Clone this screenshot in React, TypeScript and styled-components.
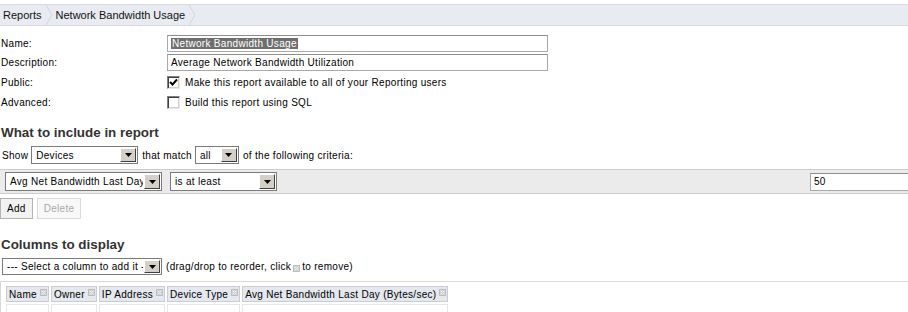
import React from 'react';
import styled, { createGlobalStyle } from 'styled-components';

const GlobalStyle = createGlobalStyle`
  html, body {
    margin:0;
    padding:0;
    background:#fff;
  }
  body {
    width:908px;
    height:312px;
    overflow:hidden;
    font-family:"Liberation Sans", Arial, sans-serif;
    font-size:10px;
    letter-spacing:0.3px;
    color:#000;
  }
`;

const Page = styled.div`
  padding-top:4px;
`;

const Crumbs = styled.div`
  display:flex;
  align-items:center;
  height:20px;
  background:#e9ebf3;
  border-top:1px solid #d9dadf;
  border-bottom:1px solid #d9dadf;
  font-size:11px;
  letter-spacing:0;
  color:#111;
  padding-left:3px;
  > span {
    white-space:nowrap;
  }
`;

const Sep = styled.svg`
  width:14px;
  height:20px;
  flex-shrink:0;
`;

const Form = styled.div`
  display:grid;
  grid-template-columns:166px 1fr;
  grid-auto-rows:auto;
  row-gap:2px;
  margin-top:9px;
  padding-left:1px;
`;

const Label = styled.div<{ $h: number }>`
  height:${p => p.$h}px;
  display:flex;
  align-items:center;
`;

const Field = styled.div<{ $h: number }>`
  height:${p => p.$h}px;
  display:flex;
  align-items:center;
`;

const TextInput = styled.div<{ $w: number; $h: number }>`
  box-sizing:border-box;
  width:${p => p.$w}px;
  height:${p => p.$h}px;
  border:1px solid #a9a9ad;
  border-top-color:#8e8e92;
  background:#fff;
  padding-left:3px;
  display:flex;
  align-items:center;
  white-space:nowrap;
  overflow:hidden;
  flex-shrink:0;
`;

const Picked = styled.span`
  background:#6f6f6f;
  color:#fff;
  padding:0 1px;
`;

const Check = styled.span`
  box-sizing:border-box;
  width:13px;
  height:13px;
  margin-right:5px;
  background:#fff;
  border:1px solid;
  border-color:#808080 #e8e8e8 #e8e8e8 #808080;
  box-shadow:inset 1px 1px 0 #404040, inset -1px -1px 0 #d4d0c8;
  display:flex;
  align-items:center;
  justify-content:center;
`;

const Heading = styled.h2<{ $top: number }>`
  margin:${p => p.$top}px 0 0;
  padding-left:1px;
  font-size:13.4px;
  line-height:16px;
  font-weight:bold;
  letter-spacing:0;
  color:#333;
`;

const Line = styled.div<{ $top: number }>`
  display:flex;
  align-items:center;
  gap:3px;
  margin-top:${p => p.$top}px;
  padding-left:2px;
  white-space:nowrap;
`;

const Gap = styled.span`
  margin-left:1px;
`;

const SelectBox = styled.div<{ $w: number; $h: number }>`
  box-sizing:border-box;
  width:${p => p.$w}px;
  height:${p => p.$h}px;
  border:1px solid #7b7b7b;
  background:#fff;
  display:flex;
  align-items:stretch;
  padding-left:4px;
  flex-shrink:0;
  white-space:nowrap;
`;

const SelectText = styled.span`
  flex:1;
  overflow:hidden;
  display:flex;
  align-items:center;
`;

const Arrow = styled.span`
  box-sizing:border-box;
  width:16px;
  margin:1px;
  background:#d4d0c8;
  border:1px solid;
  border-color:#fff #404040 #404040 #fff;
  display:flex;
  align-items:center;
  justify-content:center;
  flex-shrink:0;
`;

const CriteriaBar = styled.div`
  display:flex;
  align-items:center;
  gap:8px;
  margin-top:5px;
  height:23px;
  padding-left:5px;
  background:#ebebeb;
  border-top:1px solid #cdcdcd;
  border-bottom:1px solid #cdcdcd;
  > .value {
    margin-left:auto;
    border-right:none;
  }
`;

const Buttons = styled.div`
  display:flex;
  gap:4px;
  margin-top:4px;
`;

const Button = styled.button<{ $off?: boolean }>`
  box-sizing:border-box;
  height:21px;
  padding:0 6px;
  margin:0;
  font-family:inherit;
  font-size:10px;
  letter-spacing:0.3px;
  background:${p => (p.$off ? '#f8f8f8' : '#f2f2f2')};
  color:${p => (p.$off ? '#a9a9a9' : '#000')};
  border:1px solid ${p => (p.$off ? '#dadada' : '#b3b3b3')};
  border-radius:0;
`;

const TableBox = styled.div`
  margin-top:6px;
  border-top:1px solid #d9d9d9;
  border-left:1px solid #d9d9d9;
  padding:2px 0 0 3px;
`;

const Grid = styled.table`
  border-collapse:separate;
  border-spacing:2px;
`;

const Head = styled.th`
  position:relative;
  box-sizing:border-box;
  height:16px;
  padding:0 11px 0 2px;
  background:#e5e8ee;
  border:1px solid #c8ccd3;
  font-weight:normal;
  text-align:left;
  white-space:nowrap;
`;

const Cell = styled.td`
  height:20px;
  border:1px solid #e6e6e6;
`;

const Close = styled.span<{ $inline?: boolean }>`
  ${p => (p.$inline ? 'display:inline-block; vertical-align:-1px; margin:0 2px;' : 'position:absolute; top:2px; right:1px;')}
  width:7px;
  height:7px;
  box-sizing:border-box;
  background:#d2d2d2;
  border:1px solid #bdbdbd;
  line-height:0;
`;

function Tri() {
  return (
    <svg width="7" height="4" viewBox="0 0 7 4">
      <polygon points="0,0 7,0 3.5,4" fill="#000" />
    </svg>
  );
}

function Select({ w, h = 18, text }: { w: number; h?: number; text: string }) {
  return (
    <SelectBox $w={w} $h={h}>
      <SelectText>{text}</SelectText>
      <Arrow>
        <Tri />
      </Arrow>
    </SelectBox>
  );
}

function XMark() {
  return (
    <svg width="5" height="5" viewBox="0 0 5 5">
      <path d="M0.5 0.5 L4.5 4.5 M4.5 0.5 L0.5 4.5" stroke="#eeeeee" strokeWidth="1" />
    </svg>
  );
}

function Chevron() {
  return (
    <Sep viewBox="0 0 14 20">
      <polyline points="4,0 10,10 4,20" fill="none" stroke="#d2d5de" strokeWidth="1" />
    </Sep>
  );
}

const columns = ['Name', 'Owner', 'IP Address', 'Device Type', 'Avg Net Bandwidth Last Day (Bytes/sec)'];

export default function App() {
  return (
    <Page>
      <GlobalStyle />
      <Crumbs>
        <span>Reports</span>
        <Chevron />
        <span>Network Bandwidth Usage</span>
        <Chevron />
      </Crumbs>

      <Form>
        <Label $h={17}>Name:</Label>
        <Field $h={17}>
          <TextInput $w={381} $h={17}>
            <Picked>Network Bandwidth Usage</Picked>
          </TextInput>
        </Field>
        <Label $h={17}>Description:</Label>
        <Field $h={17}>
          <TextInput $w={381} $h={17}>Average Network Bandwidth Utilization</TextInput>
        </Field>
        <Label $h={18}>Public:</Label>
        <Field $h={18}>
          <Check>
            <svg width="9" height="9" viewBox="0 0 9 9">
              <polyline points="1,4 3.5,6.5 8,1.5" fill="none" stroke="#000" strokeWidth="2" />
            </svg>
          </Check>
          Make this report available to all of your Reporting users
        </Field>
        <Label $h={18}>Advanced:</Label>
        <Field $h={18}>
          <Check />
          Build this report using SQL
        </Field>
      </Form>

      <Heading $top={14}>What to include in report</Heading>
      <Line $top={5}>
        Show
        <Select w={107} text="Devices" />
        <Gap>that match</Gap>
        <Select w={44} text="all" />
        <Gap>of the following criteria:</Gap>
      </Line>

      <CriteriaBar>
        <Select w={157} h={19} text="Avg Net Bandwidth Last Day" />
        <Select w={107} h={19} text="is at least" />
        <TextInput className="value" $w={98} $h={18}>50</TextInput>
      </CriteriaBar>

      <Buttons>
        <Button>Add</Button>
        <Button $off>Delete</Button>
      </Buttons>

      <Heading $top={18}>Columns to display</Heading>
      <Line $top={5}>
        <Select w={160} h={17} text="--- Select a column to add it ---" />
        <Gap>
          (drag/drop to reorder, click
          <Close $inline>
            <XMark />
          </Close>
          to remove)
        </Gap>
      </Line>

      <TableBox>
        <Grid>
          <thead>
            <tr>
              {columns.map(c => (
                <Head key={c}>
                  {c}
                  <Close>
                    <XMark />
                  </Close>
                </Head>
              ))}
            </tr>
          </thead>
          <tbody>
            <tr>
              {columns.map(c => (
                <Cell key={c} />
              ))}
            </tr>
          </tbody>
        </Grid>
      </TableBox>
    </Page>
  );
}
